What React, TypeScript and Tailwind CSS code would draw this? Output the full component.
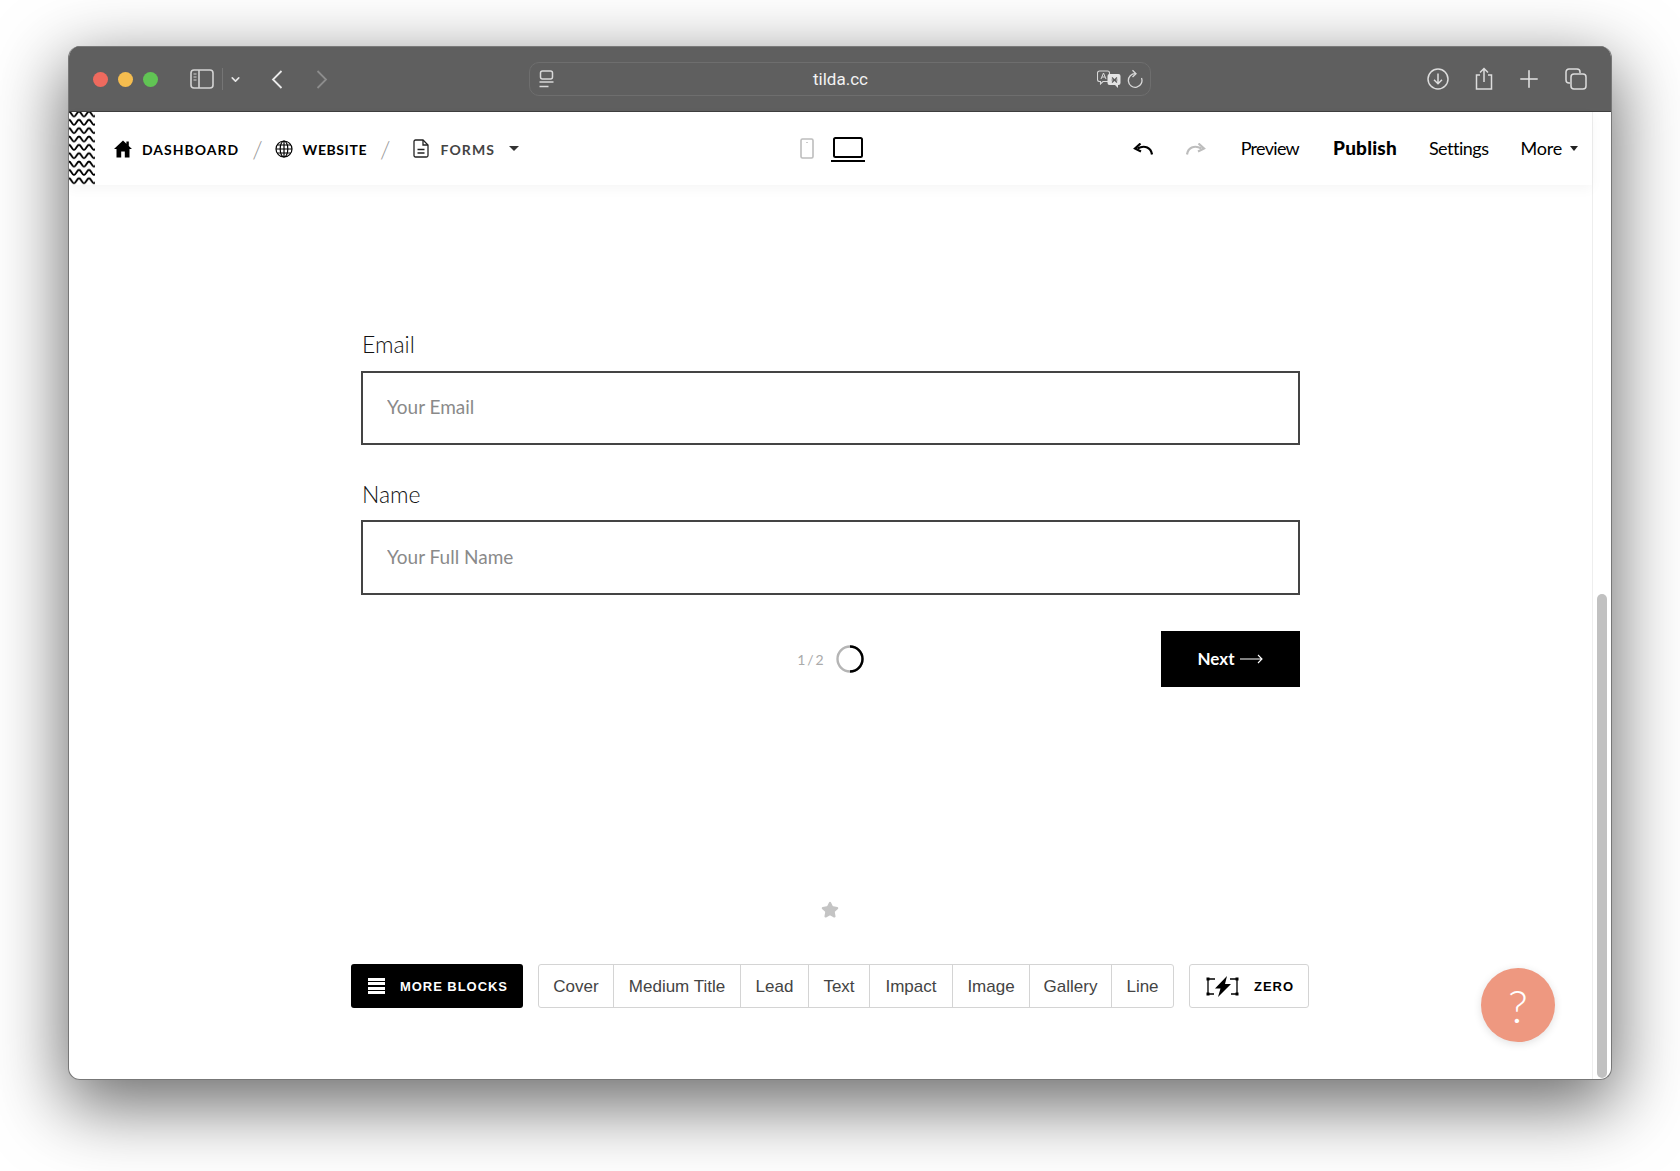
import { ChevronDown, Plus, Star } from 'lucide-react';

const labelClass = "pl-[1px] text-[23px] leading-[28px] text-[#111] font-light";
const inputClass = "mt-[12.5px] h-[74.5px] w-full border-2 border-[#444] px-6 pb-[2px] text-[19px] text-black placeholder:text-[#8a8a8a] outline-none";
const blockNames = [
    { name: 'Cover', width: 'w-[75px]' },
    { name: 'Medium Title', width: 'w-[127px]' },
    { name: 'Lead', width: 'w-[68px]' },
    { name: 'Text', width: 'w-[61px]' },
    { name: 'Impact', width: 'w-[83px]' },
    { name: 'Image', width: 'w-[77px]' },
    { name: 'Gallery', width: 'w-[82px]' },
    { name: 'Line', width: 'w-[61px]' },
];

const WaveStrip = () => (
    <svg width="26" height="73" className="shrink-0">
        <defs>
            <pattern id="waves" width="10" height="8.35" patternUnits="userSpaceOnUse" y="-2">
                <path d="M0 1.5 C2.2 1.5 2.8 6.5 5 6.5 S7.8 1.5 10 1.5" fill="none" stroke="#000" strokeWidth="1.9" />
            </pattern>
        </defs>
        <rect width="26" height="73" fill="url(#waves)" />
    </svg>
);

const TitleBar = () => (
    <div className="h-[66px] shrink-0 bg-[#5f5f5f] border-t border-[#7a7a7a] border-b-[#3f3f3f] border-b flex items-center text-[#e4e4e4] font-['Inter',sans-serif]">
        <div className="ml-[24px] flex gap-[10px] shrink-0">
            <div className="w-[15px] h-[15px] rounded-full bg-[#ee6a5e]" />
            <div className="w-[15px] h-[15px] rounded-full bg-[#f5bd4f]" />
            <div className="w-[15px] h-[15px] rounded-full bg-[#61c454]" />
        </div>
        <svg width="24" height="20" viewBox="0 0 24 20" fill="none" stroke="#d4d4d4" strokeWidth="1.6" className="ml-[32px] shrink-0">
            <rect x="1" y="1" width="22" height="18" rx="3" />
            <path d="M9 1v18" />
            <path d="M3.5 5h3M3.5 8h3M3.5 11h3" strokeWidth="1.2" />
        </svg>
        <div className="ml-[8px] w-px h-[22px] bg-[#757575] shrink-0" />
        <ChevronDown className="ml-[6px] text-[#e4e4e4] shrink-0" size={13} strokeWidth={3} />
        <svg width="12" height="19" viewBox="0 0 12 19" fill="none" stroke="#eaeaea" strokeWidth="1.8" className="ml-[29px] shrink-0">
            <path d="M10.5 1L2 9.5l8.5 8.5" />
        </svg>
        <svg width="12" height="19" viewBox="0 0 12 19" fill="none" stroke="#8c8c8c" strokeWidth="1.8" className="ml-[33px] shrink-0">
            <path d="M1.5 1L10 9.5 1.5 18" />
        </svg>
        <div className="ml-[201px] w-[622px] h-[34px] rounded-[10px] border border-[#6e6e6e] grid grid-cols-[1fr_auto_1fr] items-center shrink-0">
            <svg width="15" height="18" viewBox="0 0 15 18" fill="none" stroke="#d8d8d8" strokeWidth="1.5" className="ml-[9px]">
                <rect x="1.5" y="1" width="12" height="8" rx="2" />
                <path d="M0.5 12h14M0.5 16.5h9" />
            </svg>
            <span className="pl-[1px] pt-[1px] text-center text-[17px] text-[#f2f2f2] font-['Roboto',sans-serif]">tilda.cc</span>
            <div className="flex items-center justify-end">
                <svg width="24" height="18" viewBox="0 0 24 18" className="mr-[6px]">
                    <path d="M2.5 1h8a2 2 0 0 1 2 2v6.5a2 2 0 0 1-2 2H6l-2.5 2.5v-2.5h-1a2 2 0 0 1-2-2V3a2 2 0 0 1 2-2z" fill="none" stroke="#d8d8d8" strokeWidth="1.1" />
                    <path d="M4 9l2.5-6 2.5 6M5 7h3" fill="none" stroke="#d8d8d8" strokeWidth="1" />
                    <path d="M12.5 4h9a2 2 0 0 1 2 2v7a2 2 0 0 1-2 2H21v3l-3-3h-5.5a2 2 0 0 1-2-2V6a2 2 0 0 1 2-2z" fill="#e4e4e4" />
                    <path d="M15 7.5l5 5M20 7.5l-5 5M14.5 10h6" stroke="#5f5f5f" strokeWidth="1.2" />
                </svg>
                <svg width="16" height="20" viewBox="0 0 16 20" fill="none" stroke="#d8d8d8" strokeWidth="1.3" className="mr-[7px]">
                    <path d="M8.5 4.7A6.8 6.8 0 1 0 14.5 9" />
                    <path d="M5.5 1.2L9 4.7 5.5 8" />
                </svg>
            </div>
        </div>
        <div className="ml-auto mr-[24px] flex items-center shrink-0">
            <svg width="22" height="22" viewBox="0 0 22 22" fill="none" stroke="#dcdcdc" strokeWidth="1.5">
                <circle cx="11" cy="11" r="10" />
                <path d="M11 5.5v10M7 11.7l4 4 4-4" />
            </svg>
            <svg width="18" height="23" viewBox="0 0 18 23" fill="none" stroke="#dcdcdc" strokeWidth="1.5" className="ml-[26px] -mt-[1px]">
                <path d="M5 8H1.5v14h15V8H13" />
                <path d="M9 15V2M5 5.5l4-4 4 4" />
            </svg>
            <Plus className="ml-[22px] text-[#e4e4e4]" size={28} strokeWidth={1.3} />
            <svg width="22" height="22" viewBox="0 0 22 22" fill="none" stroke="#dcdcdc" strokeWidth="1.5" className="ml-[22px]">
                <path d="M5 15H4a3 3 0 0 1-3-3V4a3 3 0 0 1 3-3h8a3 3 0 0 1 3 3v1" />
                <rect x="6" y="6" width="15" height="15" rx="3" />
            </svg>
        </div>
    </div>
);

const EditorNav = () => (
    <div className="h-[73px] shrink-0 bg-white flex items-center shadow-[0_4px_12px_rgba(0,0,0,0.04)] relative z-10 font-['Lato',sans-serif]">
        <div className="w-[731px] shrink-0 flex items-center">
            <WaveStrip />
            <svg width="18" height="18" viewBox="0 0 18 18" fill="#000" className="ml-[19px] shrink-0">
                <path d="M9 0.5L0 9h2.5v8.5h4.7v-6h3.6v6h4.7V9H18L14.8 6V1.5h-2.4v2.2z" />
            </svg>
            <span className="ml-[10px] mt-[1px] text-[14px] font-bold tracking-[1px] text-black">DASHBOARD</span>
            <span className="ml-[13px] text-[24px] font-light text-[#999]">/</span>
            <svg width="18" height="18" viewBox="0 0 18 18" fill="none" stroke="#000" strokeWidth="1.2" className="ml-[12px] shrink-0">
                <circle cx="9" cy="9" r="8" />
                <ellipse cx="9" cy="9" rx="3.8" ry="8" />
                <path d="M9 1v16M1 9h16M2.2 5h13.6M2.2 13h13.6" />
            </svg>
            <span className="ml-[10px] mt-[1px] text-[14px] font-bold tracking-[0.6px] text-black">WEBSITE</span>
            <span className="ml-[13px] text-[24px] font-light text-[#999]">/</span>
            <svg width="16" height="19" viewBox="0 0 16 19" fill="none" stroke="#222" strokeWidth="1.3" className="ml-[23px] shrink-0">
                <path d="M1 2.5a1.5 1.5 0 0 1 1.5-1.5H10l5 5v10.5a1.5 1.5 0 0 1-1.5 1.5h-11A1.5 1.5 0 0 1 1 16.5z" />
                <path d="M10 1v5h5M4.5 10.5h7M4.5 14h7" />
            </svg>
            <span className="ml-[11px] mt-[1px] text-[14px] font-bold tracking-[1.1px] text-[#444]">FORMS</span>
            <div className="ml-[14px] w-0 h-0 border-x-[5px] border-x-transparent border-t-[5px] border-t-[#333]" />
        </div>
        <svg width="14" height="21" viewBox="0 0 14 21" fill="none" stroke="#bdbdbd" strokeWidth="1.6" className="shrink-0">
            <rect x="1" y="1" width="12" height="19" rx="1.5" />
            <path d="M7 4v1" stroke="#999" strokeWidth="1" />
        </svg>
        <svg width="36" height="25" viewBox="0 0 36 25" fill="none" stroke="#000" className="ml-[16px] mt-[1px] shrink-0">
            <rect x="4" y="1" width="28" height="19" rx="1.5" strokeWidth="2" />
            <path d="M1 24h34" strokeWidth="2" />
        </svg>
        <div className="ml-auto mr-[14px] flex items-center">
            <svg width="20" height="12" viewBox="0 0 20 12" fill="none" stroke="#000" strokeWidth="2.2" className="shrink-0">
                <path d="M19 11.5C18 5 12 1.5 4.5 5.5" />
                <path d="M7.5 0.5L2 5.5l6 3" />
            </svg>
            <svg width="20" height="12" viewBox="0 0 20 12" fill="none" stroke="#bdbdbd" strokeWidth="2.2" className="ml-[33px] shrink-0">
                <path d="M1 11.5C2 5 8 1.5 15.5 5.5" />
                <path d="M12.5 0.5l5.5 5-6 3" />
            </svg>
            <span className="ml-[35px] text-[18px] tracking-[-0.7px] text-black">Preview</span>
            <span className="ml-[34px] text-[19px] tracking-[0.2px] font-black text-black">Publish</span>
            <span className="ml-[32px] text-[18px] tracking-[-0.5px] text-black">Settings</span>
            <span className="ml-[32px] text-[18px] tracking-[-0.2px] text-black">More</span>
            <div className="ml-[8px] w-0 h-0 border-x-[4.5px] border-x-transparent border-t-[5px] border-t-[#222]" />
        </div>
    </div>
);

const FormBlock = () => (
    <div className="ml-[292px] w-[939px] pt-[145px] font-['Lato',sans-serif]">
        <div className={labelClass}>Email</div>
        <input className={inputClass} placeholder="Your Email" />
        <div className={`${labelClass} mt-[34.5px]`}>Name</div>
        <input className={inputClass} placeholder="Your Full Name" />
        <div className="mt-[36.5px] grid grid-cols-[1fr_auto_1fr] items-center">
            <div />
            <div className="flex items-center gap-[13px]">
                <span className="text-[14px] tracking-[-0.8px] text-[#aaa]">1 / 2</span>
                <svg width="28" height="28" viewBox="0 0 28 28" fill="none" strokeWidth="2.4">
                    <circle cx="14" cy="14" r="12.5" stroke="#b5b5b5" />
                    <path d="M14 1.5a12.5 12.5 0 0 1 0 25" stroke="#000" />
                </svg>
            </div>
            <button className="justify-self-end w-[139px] h-[56px] bg-black text-white text-[17px] font-bold flex items-center justify-center gap-[6px]">
                Next
                <svg width="23" height="10" viewBox="0 0 23 10" fill="none" stroke="#fff" strokeWidth="1.1">
                    <path d="M0 5h22M18 1l4 4-4 4" />
                </svg>
            </button>
        </div>
    </div>
);

const BlocksBar = () => (
    <div className="ml-[282px] mt-[45px] flex items-stretch h-[44px] font-['Liberation_Sans',sans-serif]">
        <button className="w-[172px] rounded-[3px] bg-black text-white flex items-center">
            <div className="ml-[17px] w-[17px] h-[16px] flex flex-col justify-between">
                <div className="h-[3px] bg-white" />
                <div className="h-[3px] bg-white" />
                <div className="h-[3px] bg-white" />
                <div className="h-[3px] bg-white" />
            </div>
            <span className="ml-[15px] pt-[1px] text-[13px] font-bold tracking-[0.95px]">MORE BLOCKS</span>
        </button>
        <div className="ml-[15px] flex rounded-[3px] border border-[#d4d4d4] divide-x divide-[#d4d4d4]">
            {blockNames.map((block) => (
                <div key={block.name} className={`${block.width} flex items-center justify-center pt-[1px] text-[17px] text-[#444]`}>
                    {block.name}
                </div>
            ))}
        </div>
        <div className="ml-[15px] w-[120px] rounded-[3px] border border-[#d4d4d4] flex items-center">
            <svg width="33" height="21" viewBox="0 0 33 21" className="ml-[16px] shrink-0" fill="none" stroke="#000" strokeWidth="1.3">
                <path d="M2 3V18M31 3V18M2 3H9M24 3H31M2 18H8M25 18H31" />
                <path d="M0.5 1.5h3v3h-3zM29.5 1.5h3v3h-3zM0.5 16.5h3v3h-3zM29.5 16.5h3v3h-3z" fill="#000" stroke="none" />
                <path d="M21 0L9 12.5h5.5L12 21 25 8h-6z" fill="#000" stroke="none" />
            </svg>
            <span className="ml-[15px] pt-[1px] text-[13px] font-bold tracking-[1px] text-black">ZERO</span>
        </div>
    </div>
);

export default function App() {
    return (
        <div className="w-[1680px] h-[1171px] bg-white pl-[68px] pt-[46px] overflow-hidden">
            <div className="w-[1544px] h-[1034px] rounded-[12px] overflow-hidden bg-white flex flex-col shadow-[0_22px_70px_4px_rgba(0,0,0,0.58)] relative border-x border-b border-[#777]">
                <TitleBar />
                <div className="flex-1 flex min-h-0">
                    <div className="flex-1 flex flex-col min-w-0">
                        <EditorNav />
                        <FormBlock />
                        <Star className="ml-[752px] mt-[214px] text-[#c4c4c4]" size={18} fill="#c4c4c4" />
                        <BlocksBar />
                    </div>
                    <div className="w-[19px] shrink-0 border-l border-[#eeeeee] flex flex-col justify-end">
                        <div className="ml-[4px] w-[10px] h-[484px] mb-[1px] rounded-full bg-[#c1c1c1]" />
                    </div>
                </div>
                <div className="absolute left-[1412px] top-[922px] w-[74px] h-[74px] rounded-full bg-[#ee9880] shadow-[0_2px_8px_rgba(0,0,0,0.12)] flex items-center justify-center text-white text-[46px] font-light font-['Lato',sans-serif]">?</div>
            </div>
        </div>
    );
}
